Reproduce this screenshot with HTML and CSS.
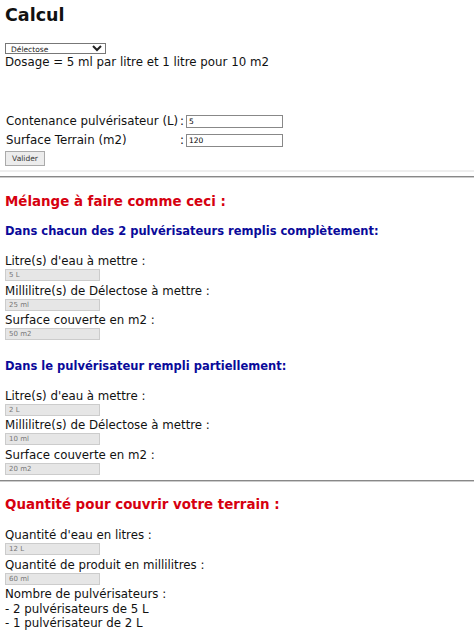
FILE: index.html
```html
<!DOCTYPE html>
<html lang="fr">
<head>
<meta charset="utf-8">
<title>Calcul</title>
<link rel="stylesheet" href="styles.css">
</head>
<body>
<h1 class="title">Calcul</h1>
<div class="product">
  <select class="product-select"><option>Délectose</option></select>
</div>
<p class="dosage">Dosage = 5 ml par litre et 1 litre pour 10 m2</p>

<form class="calc-form">
  <div class="form-grid">
    <span class="form-label">Contenance pulvérisateur (L)</span><span class="colon">:</span><input class="form-input" type="text" value="5">
    <span class="form-label">Surface Terrain (m2)</span><span class="colon">:</span><input class="form-input" type="text" value="120">
  </div>
  <button class="btn" type="button">Valider</button>
</form>
<div class="band"></div>
<hr class="rule">

<h2 class="section-title">Mélange à faire comme ceci :</h2>
<h3 class="sub-title">Dans chacun des 2 pulvérisateurs remplis complètement:</h3>
<div class="field"><div class="field-label">Litre(s) d'eau à mettre :</div><input class="out" type="text" value="5 L" disabled></div>
<div class="field"><div class="field-label">Millilitre(s) de Délectose à mettre :</div><input class="out" type="text" value="25 ml" disabled></div>
<div class="field"><div class="field-label">Surface couverte en m2 :</div><input class="out" type="text" value="50 m2" disabled></div>

<h3 class="sub-title sub-2">Dans le pulvérisateur rempli partiellement:</h3>
<div class="field"><div class="field-label">Litre(s) d'eau à mettre :</div><input class="out" type="text" value="2 L" disabled></div>
<div class="field"><div class="field-label">Millilitre(s) de Délectose à mettre :</div><input class="out" type="text" value="10 ml" disabled></div>
<div class="field"><div class="field-label">Surface couverte en m2 :</div><input class="out" type="text" value="20 m2" disabled></div>

<hr class="rule rule-2">
<h2 class="section-title">Quantité pour couvrir votre terrain :</h2>
<div class="field"><div class="field-label">Quantité d'eau en litres :</div><input class="out" type="text" value="12 L" disabled></div>
<div class="field"><div class="field-label">Quantité de produit en millilitres :</div><input class="out" type="text" value="60 ml" disabled></div>
<div class="field-label">Nombre de pulvérisateurs :</div>
<div class="field-label line">- 2 pulvérisateurs de 5 L</div>
<div class="field-label line">- 1 pulvérisateur de 2 L</div>
</body>
</html>
```
FILE: styles.css
```css
html, body {
  margin: 0;
  padding: 0;
  background: #fff;
}
body {
  font-family: "DejaVu Sans", Verdana, sans-serif;
  font-size: 11.8px;
  color: #111;
  padding: 0 0 0 5px;
}
.title {
  font-family: "DejaVu Sans", Verdana, sans-serif;
  font-weight: bold;
  font-size: 17.5px;
  line-height: 22px;
  margin: 4px 0 0 0;
  color: #111;
}
.product {
  margin-top: 17px;
  height: 11px;
}
.product-select {
  display: block;
  width: 101px;
  height: 11px;
  font-size: 7.5px;
  padding: 0 0 0 1px;
  margin: 0;
  border: 1px solid #777;
  border-radius: 0;
  background: #fff;
  font-family: "DejaVu Sans", sans-serif;
  color: #222;
  line-height: 9px;
}
.dosage {
  margin: 0;
  line-height: 15px;
  height: 15px;
  margin-top: 1px;
}
.calc-form {
  margin-top: 44px;
  margin-left: 1px;
}
.form-grid {
  display: grid;
  grid-template-columns: 172px 4px 97px;
  column-gap: 2px;
  row-gap: 5px;
  align-items: center;
}
.form-label {
  line-height: 14px;
  white-space: nowrap;
}
.colon {
  line-height: 14px;
  text-align: center;
}
.form-input {
  box-sizing: border-box;
  width: 97px;
  height: 13px;
  border: 1px solid #888;
  padding: 0 2px;
  font-size: 7.5px;
  font-family: "DejaVu Sans", sans-serif;
  margin: 0;
}
.btn {
  display: block;
  margin-top: 4px;
  margin-left: -1px;
  box-sizing: border-box;
  width: 40px;
  height: 15px;
  font-size: 7.5px;
  font-family: "DejaVu Sans", sans-serif;
  padding: 0;
  border: 1px solid #aaa;
  background: #ececec;
  color: #333;
  border-radius: 0;
}
.band {
  margin-top: 4px;
  margin-left: -5px;
  height: 2px;
  background: #eeeeee;
}
.rule {
  margin: 4px 0 0 -5px;
  border: 0;
  border-top: 1px solid #888;
  border-bottom: 1px solid #ccc;
  height: 0;
}
.section-title {
  font-size: 13.4px;
  font-weight: bold;
  color: #d6000f;
  margin: 15px 0 0 0;
  line-height: 17px;
}
.sub-title {
  font-size: 11.5px;
  font-weight: bold;
  color: #0a0a9a;
  margin: 14px 0 0 0;
  line-height: 15px;
}
.sub-title + .field {
  margin-top: 15px;
}
.field {
  display: flex;
  flex-direction: column;
  align-items: flex-start;
}
.field-label {
  line-height: 15px;
  height: 15px;
  white-space: nowrap;
}
.line {
  height: 14px;
  line-height: 14px;
}
.out {
  box-sizing: border-box;
  width: 95px;
  height: 12px;
  margin: 0 0 2.5px 0;
  border: 1px solid #ccc;
  background: #e6e6e6;
  color: #777;
  font-size: 7px;
  font-family: "DejaVu Sans", sans-serif;
  padding: 0 3px;
}
.sub-2 {
  margin-top: 16px;
}
.rule-2 {
  margin-top: 3px;
}
.rule-2 + .section-title {
  margin-top: 14px;
}
.section-title + .field {
  margin-top: 15px;
}
```
